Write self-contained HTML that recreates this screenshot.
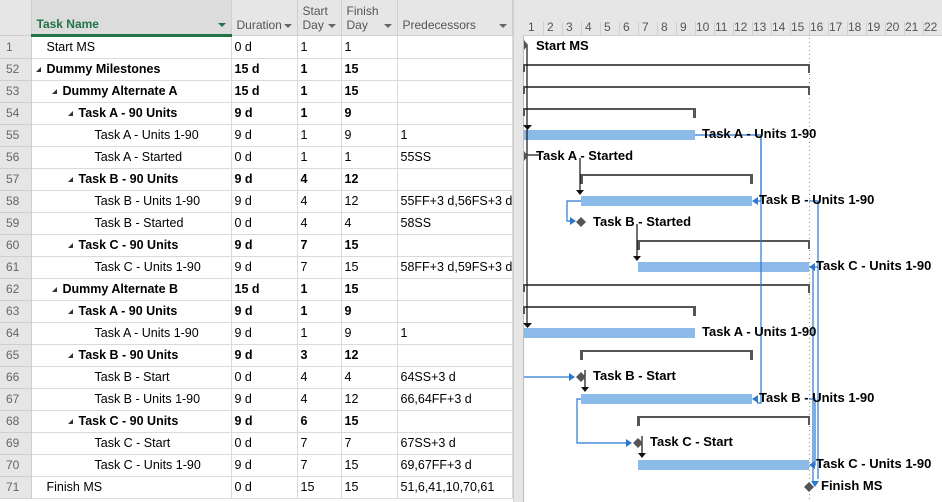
<!DOCTYPE html><html><head><meta charset="utf-8"><style>
body{margin:0;width:942px;height:502px;overflow:hidden;background:#fff;font-family:"Liberation Sans",Arial,sans-serif;font-size:12.5px;color:#000;position:relative}
table{position:absolute;left:0;top:0;border-collapse:collapse;table-layout:fixed}
td{height:21px;line-height:21px;padding:0 0 0 3px;border-right:1px solid #dadada;border-bottom:1px solid #dadada;white-space:nowrap;overflow:hidden;box-sizing:content-box}
td.n{background:#e6e6e6;color:#666;font-size:12px;padding-left:6px;border-color:#cfcfcf}
tr.b td{font-weight:bold}
tr.b td.n{font-weight:normal}
th{height:32px;background:#e6e6e6;font-weight:normal;color:#555;text-align:left;padding:0 0 3px 5px;border-right:1px solid #cfcfcf;border-bottom:1px solid #cfcfcf;font-size:12px;vertical-align:bottom;position:relative;line-height:14px}
th .ar{position:absolute;right:5px;bottom:7px;width:0;height:0;border-left:4px solid transparent;border-right:4px solid transparent;border-top:4px solid #666}
th.tn{color:#217346;font-weight:bold;border-bottom:3px solid #217346;height:30px;background:#dcdcdc}
.tri{display:inline-block;width:0;height:0;border-left:5px solid transparent;border-bottom:5px solid #333;margin-right:6px;vertical-align:1px}
</style></head><body>
<table>
<colgroup><col style="width:31px"><col style="width:200px"><col style="width:66px"><col style="width:44px"><col style="width:56px"><col style="width:115px"></colgroup>
<tr><th style="background:#e6e6e6"></th><th class="tn">Task Name<span class="ar" style="border-top-color:#217346"></span></th><th>Duration<span class="ar"></span></th><th>Start<br>Day<span class="ar"></span></th><th>Finish<br>Day<span class="ar"></span></th><th>Predecessors<span class="ar"></span></th></tr>
<tr><td class="n">1</td><td style="padding-left:15px">Start MS</td><td>0 d</td><td>1</td><td>1</td><td></td></tr>
<tr class="b"><td class="n">52</td><td style="padding-left:4px"><span class="tri"></span>Dummy Milestones</td><td>15 d</td><td>1</td><td>15</td><td></td></tr>
<tr class="b"><td class="n">53</td><td style="padding-left:20px"><span class="tri"></span>Dummy Alternate A</td><td>15 d</td><td>1</td><td>15</td><td></td></tr>
<tr class="b"><td class="n">54</td><td style="padding-left:36px"><span class="tri"></span>Task A - 90 Units</td><td>9 d</td><td>1</td><td>9</td><td></td></tr>
<tr><td class="n">55</td><td style="padding-left:63px">Task A - Units 1-90</td><td>9 d</td><td>1</td><td>9</td><td>1</td></tr>
<tr><td class="n">56</td><td style="padding-left:63px">Task A - Started</td><td>0 d</td><td>1</td><td>1</td><td>55SS</td></tr>
<tr class="b"><td class="n">57</td><td style="padding-left:36px"><span class="tri"></span>Task B - 90 Units</td><td>9 d</td><td>4</td><td>12</td><td></td></tr>
<tr><td class="n">58</td><td style="padding-left:63px">Task B - Units 1-90</td><td>9 d</td><td>4</td><td>12</td><td>55FF+3 d,56FS+3 d</td></tr>
<tr><td class="n">59</td><td style="padding-left:63px">Task B - Started</td><td>0 d</td><td>4</td><td>4</td><td>58SS</td></tr>
<tr class="b"><td class="n">60</td><td style="padding-left:36px"><span class="tri"></span>Task C - 90 Units</td><td>9 d</td><td>7</td><td>15</td><td></td></tr>
<tr><td class="n">61</td><td style="padding-left:63px">Task C - Units 1-90</td><td>9 d</td><td>7</td><td>15</td><td>58FF+3 d,59FS+3 d</td></tr>
<tr class="b"><td class="n">62</td><td style="padding-left:20px"><span class="tri"></span>Dummy Alternate B</td><td>15 d</td><td>1</td><td>15</td><td></td></tr>
<tr class="b"><td class="n">63</td><td style="padding-left:36px"><span class="tri"></span>Task A - 90 Units</td><td>9 d</td><td>1</td><td>9</td><td></td></tr>
<tr><td class="n">64</td><td style="padding-left:63px">Task A - Units 1-90</td><td>9 d</td><td>1</td><td>9</td><td>1</td></tr>
<tr class="b"><td class="n">65</td><td style="padding-left:36px"><span class="tri"></span>Task B - 90 Units</td><td>9 d</td><td>3</td><td>12</td><td></td></tr>
<tr><td class="n">66</td><td style="padding-left:63px">Task B - Start</td><td>0 d</td><td>4</td><td>4</td><td>64SS+3 d</td></tr>
<tr><td class="n">67</td><td style="padding-left:63px">Task B - Units 1-90</td><td>9 d</td><td>4</td><td>12</td><td>66,64FF+3 d</td></tr>
<tr class="b"><td class="n">68</td><td style="padding-left:36px"><span class="tri"></span>Task C - 90 Units</td><td>9 d</td><td>6</td><td>15</td><td></td></tr>
<tr><td class="n">69</td><td style="padding-left:63px">Task C - Start</td><td>0 d</td><td>7</td><td>7</td><td>67SS+3 d</td></tr>
<tr><td class="n">70</td><td style="padding-left:63px">Task C - Units 1-90</td><td>9 d</td><td>7</td><td>15</td><td>69,67FF+3 d</td></tr>
<tr><td class="n">71</td><td style="padding-left:15px">Finish MS</td><td>0 d</td><td>15</td><td>15</td><td>51,6,41,10,70,61</td></tr>
</table>
<div style="position:absolute;left:513px;top:0;width:9px;height:502px;background:#e6e6e6;border-left:1px solid #cfcfcf;border-right:1px solid #bdbdbd"></div>
<svg style="position:absolute;left:0;top:0" width="942" height="502" font-family="Liberation Sans,Arial,sans-serif">
<rect x="523" y="0" width="419" height="36" fill="#e6e6e6"/>
<line x1="523" y1="35.5" x2="942" y2="35.5" stroke="#cfcfcf"/>
<g font-size="12" fill="#555">
<text x="528" y="31">1</text><text x="547" y="31">2</text><text x="566" y="31">3</text><text x="585" y="31">4</text><text x="604" y="31">5</text><text x="623" y="31">6</text><text x="642" y="31">7</text><text x="661" y="31">8</text><text x="680" y="31">9</text><text x="696" y="31">10</text><text x="715" y="31">11</text><text x="734" y="31">12</text><text x="753" y="31">13</text><text x="772" y="31">14</text><text x="791" y="31">15</text><text x="810" y="31">16</text><text x="829" y="31">17</text><text x="848" y="31">18</text><text x="867" y="31">19</text><text x="886" y="31">20</text><text x="905" y="31">21</text><text x="924" y="31">22</text>
</g>
<g stroke="#d0d0d0">
<line x1="543.5" y1="22" x2="543.5" y2="35"/><line x1="562.5" y1="22" x2="562.5" y2="35"/><line x1="581.5" y1="22" x2="581.5" y2="35"/><line x1="600.5" y1="22" x2="600.5" y2="35"/><line x1="619.5" y1="22" x2="619.5" y2="35"/><line x1="638.5" y1="22" x2="638.5" y2="35"/><line x1="657.5" y1="22" x2="657.5" y2="35"/><line x1="676.5" y1="22" x2="676.5" y2="35"/><line x1="695.5" y1="22" x2="695.5" y2="35"/><line x1="714.5" y1="22" x2="714.5" y2="35"/><line x1="733.5" y1="22" x2="733.5" y2="35"/><line x1="752.5" y1="22" x2="752.5" y2="35"/><line x1="771.5" y1="22" x2="771.5" y2="35"/><line x1="790.5" y1="22" x2="790.5" y2="35"/><line x1="809.5" y1="22" x2="809.5" y2="35"/><line x1="828.5" y1="22" x2="828.5" y2="35"/><line x1="847.5" y1="22" x2="847.5" y2="35"/><line x1="866.5" y1="22" x2="866.5" y2="35"/><line x1="885.5" y1="22" x2="885.5" y2="35"/><line x1="904.5" y1="22" x2="904.5" y2="35"/><line x1="923.5" y1="22" x2="923.5" y2="35"/>
</g>
<line x1="809.5" y1="38" x2="809.5" y2="502" stroke="#888" stroke-dasharray="1,3"/>
<g fill="none" stroke="#555" stroke-width="2">
<path d="M524 72V65H809V73"/><path d="M524 94V87H809V95"/>
<path d="M524 116V109H695V117" /><path d="M581 182V175H752V183"/>
<path d="M638 248V241H809V249"/><path d="M524 292V285H809V293"/>
<path d="M524 314V307H695V315"/><path d="M581 358V351H752V359"/>
<path d="M638 424V417H809V425"/>
</g>
<g fill="#555"><rect x="693" y="108" width="3" height="10"/><rect x="750" y="174" width="3" height="10"/><rect x="693" y="306" width="3" height="10"/><rect x="750" y="350" width="3" height="10"/><rect x="580" y="174" width="3" height="10"/><rect x="637" y="240" width="3" height="10"/><rect x="580" y="350" width="3" height="10"/><rect x="637" y="416" width="3" height="10"/></g>
<g fill="#8cbbea">
<rect x="524" y="130" width="171" height="10"/><rect x="581" y="196" width="171" height="10"/><rect x="638" y="262" width="171" height="10"/>
<rect x="524" y="328" width="171" height="10"/><rect x="581" y="394" width="171" height="10"/><rect x="638" y="460" width="171" height="10"/>
</g>
<g fill="none" stroke="#111" stroke-width="1.2">
<path d="M527 44V325"/><path d="M527 155H540"/>
<path d="M580 158V191"/><path d="M637 224V257"/>
<path d="M585 370V387"/><path d="M642 436V453"/>
</g>
<g fill="#111"><path d="M523 125h9l-4.5 5z"/><path d="M576 190h8l-4 5z"/><path d="M633 256h8l-4 5z"/><path d="M523 323h9l-4.5 5z"/><path d="M581 387h8l-4 5z"/><path d="M638 453h8l-4 5z"/></g>
<g fill="none" stroke="#2a78d0" stroke-width="1.2">
<path d="M695 135H761V201H757"/><path d="M809 201H818V267H813"/>
<path d="M581 201H567V221H573"/><path d="M761 138V403H757"/>
<path d="M524 377H572"/><path d="M581 399H577V443H629"/>
<path d="M809 399H815V465H811"/><path d="M813 267V482"/><path d="M818 267V479"/>
</g>
<g fill="#2a78d0"><path d="M752 201l6-4v8z"/><path d="M809 267l6-4v8z"/><path d="M576 221l-6-4v8z"/><path d="M752 399l6-4v8z"/><path d="M575 377l-6-4v8z"/><path d="M632 443l-6-4v8z"/><path d="M809 465l6-4v8z"/><path d="M811 481h8l-4 6z"/></g>
<g fill="#555"><path d="M524 40l4 5-4 5z"/><path d="M524 151l4 5-4 5z"/><path d="M581 217l5 5-5 5-5-5z"/><path d="M581 372l5 5-5 5-5-5z"/><path d="M638 438l5 5-5 5-5-5z"/><path d="M809 482l5 5-5 5-5-5z"/></g>
<g font-size="13" font-weight="bold" fill="#000">
<text x="536" y="50">Start MS</text>
<text x="702" y="138">Task A - Units 1-90</text>
<text x="536" y="160">Task A - Started</text>
<text x="759" y="204">Task B - Units 1-90</text>
<text x="593" y="226">Task B - Started</text>
<text x="816" y="270">Task C - Units 1-90</text>
<text x="702" y="336">Task A - Units 1-90</text>
<text x="593" y="380">Task B - Start</text>
<text x="759" y="402">Task B - Units 1-90</text>
<text x="650" y="446">Task C - Start</text>
<text x="816" y="468">Task C - Units 1-90</text>
<text x="821" y="490">Finish MS</text>
</g>
</svg>
</body></html>
